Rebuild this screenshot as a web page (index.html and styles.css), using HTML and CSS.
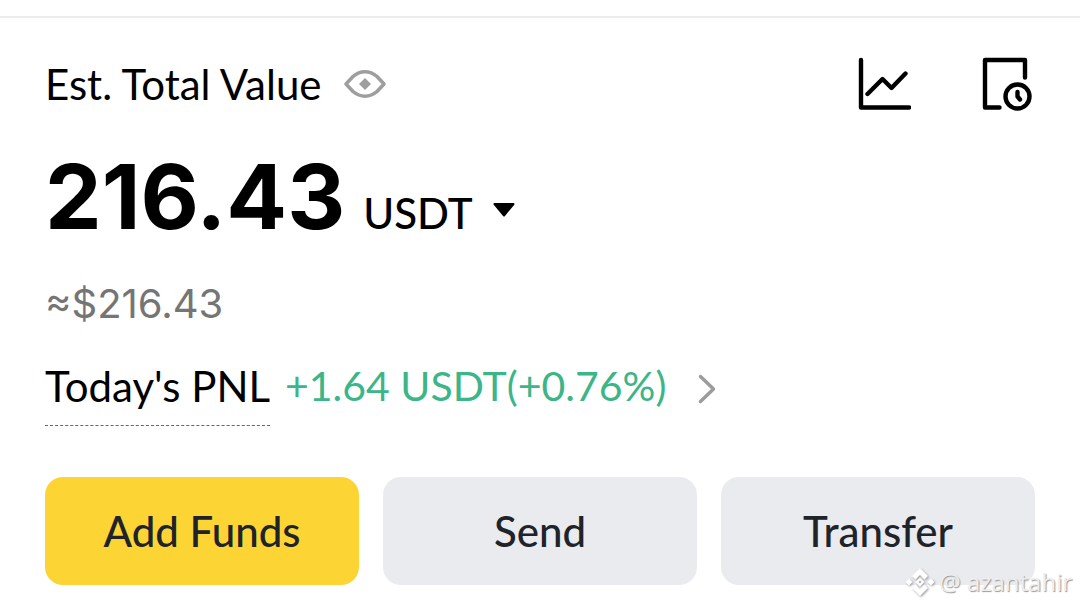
FILE: index.html
```html
<!DOCTYPE html>
<html lang="en">
<head>
<meta charset="utf-8">
<meta name="viewport" content="width=device-width, initial-scale=1">
<title>Est. Total Value</title>
<link rel="stylesheet" href="styles.css">
</head>
<body>
<main class="wallet">
  <header class="top">
    <h1 class="title">Est. Total Value</h1>
    <button class="icon-button eye" aria-label="Hide balance">
      <svg width="44" height="30" viewBox="0 0 44 30" fill="none" stroke="#9c9f9e" stroke-width="3.6" stroke-linejoin="round"><path d="M3 15L10 7.500Q15.500 2.800 22 2.800Q28.500 2.800 34 7.500L41 15L34 22.500Q28.500 27.200 22 27.200Q15.500 27.200 10 22.500Z"/><path d="M22 9L28 15L22 21L16 15Z" fill="#9c9f9e" stroke="none"/></svg>
    </button>
    <nav class="tools">
      <button class="icon-button" aria-label="Analysis">
        <svg width="54" height="54" viewBox="0 0 54 54" fill="none" stroke="#000" stroke-width="4.400" stroke-linecap="round" stroke-linejoin="round"><path d="M4 3V50.500H52M10.500 37L25.500 22L34.500 31L48.500 16.500"/></svg>
      </button>
      <button class="icon-button" aria-label="History">
        <svg width="54" height="54" viewBox="0 0 54 54" fill="none" stroke="#000" stroke-width="4.400" stroke-linecap="round" stroke-linejoin="round"><path d="M44 20.500V3H4V50.500H18.500"/><circle cx="36.500" cy="39.500" r="12"/><path d="M36.500 35V39.500L39 42.500"/></svg>
      </button>
    </nav>
  </header>
  <div class="balance">
    <strong class="amount">216.43</strong>
    <button class="currency">USDT
      <svg width="22" height="22" viewBox="0 0 22 22" fill="#000" stroke="#000" stroke-width="2" stroke-linejoin="round"><path d="M1.500 2H20.500L11 13.500Z"/></svg>
    </button>
  </div>
  <p class="approx">≈$216.43</p>
  <div class="pnl">
    <span class="pnl-label">Today's PNL</span>
    <a class="pnl-value" href="#pnl">+1.64 USDT(+0.76%)
      <svg width="18" height="36" viewBox="0 0 18 36" fill="none" stroke="#9c9c9c" stroke-width="3.500" stroke-linecap="round" stroke-linejoin="round"><path d="M2.500 8.500L15.500 21L2.500 33.500"/></svg>
    </a>
  </div>
  <div class="actions">
    <button class="action primary">Add Funds</button>
    <button class="action">Send</button>
    <button class="action">Transfer</button>
  </div>
</main>
<div class="watermark">
  <svg width="30" height="30" viewBox="0 0 30 30" fill="#fff"><path d="M15 1L23 9L19.500 12.500L15 8L10.500 12.500L7 9ZM4 11.500L7.500 15L4 18.500L.5 15ZM26 11.500L29.500 15L26 18.500L22.500 15ZM15 29L7 21L10.500 17.500L15 22L19.500 17.500L23 21Z"/><path d="M15 12L18 15L15 18L12 15Z" fill="none" stroke="#fff" stroke-width="2"/></svg>
  <span>@ azantahir</span>
</div>
</body>
</html>
```
FILE: styles.css
```css
* { box-sizing: border-box; }
body {
  margin: 0;
  background: #fff;
  color: #000;
  font-family: Lato, "Open Sans", sans-serif;
  font-size: 42px;
  line-height: 52px;
}
h1, p { margin: 0; font: inherit; }
button {
  padding: 0;
  border: 0;
  background: none;
  color: inherit;
  font: inherit;
  cursor: pointer;
}
svg { display: block; flex: none; }
.wallet {
  margin-top: 16px;
  padding: 36px 45px 22px;
  border-top: 2px solid #ececec;
}
.top { display: flex; align-items: center; height: 60px; }
.eye { margin-left: 21px; }
.tools { display: flex; gap: 70px; margin-left: auto; }
.balance {
  display: flex;
  align-items: baseline;
  gap: 18px;
  margin-top: 29px;
}
.amount {
  font-family: Inter, sans-serif;
  font-size: 90px;
  line-height: 108px;
  font-weight: 700;
}
.currency {
  display: flex;
  align-items: center;
  gap: 20px;
  font-weight: 500;
}
.approx {
  margin-top: 27px;
  color: #757575;
  font-family: Inter, sans-serif;
  font-size: 40px;
}
.pnl { display: flex; align-items: flex-start; gap: 15px; margin-top: 30px; }
.pnl-label { padding-bottom: 13px; border-bottom: 1px dashed #666; }
.pnl-value {
  display: flex;
  align-items: center;
  gap: 32px;
  color: #3cb588;
  font-size: 41px;
  text-decoration: none;
}
.actions {
  display: grid;
  grid-template-columns: repeat(3, 1fr);
  gap: 24px;
  margin-top: 51px;
}
.action {
  padding: 28px 0;
  border-radius: 18px;
  background: #eaebef;
  color: #202329;
  font-weight: 500;
}
.primary { background: #fcd535; }
.watermark {
  position: absolute;
  right: 8px;
  bottom: 9px;
  display: flex;
  align-items: center;
  gap: 4px;
  color: #eee;
  font: 24px/32px "Open Sans", sans-serif;
  text-shadow: 1px 1px 1px #999;
}
.watermark svg { filter: drop-shadow(1px 1px 1px #999); }
```
